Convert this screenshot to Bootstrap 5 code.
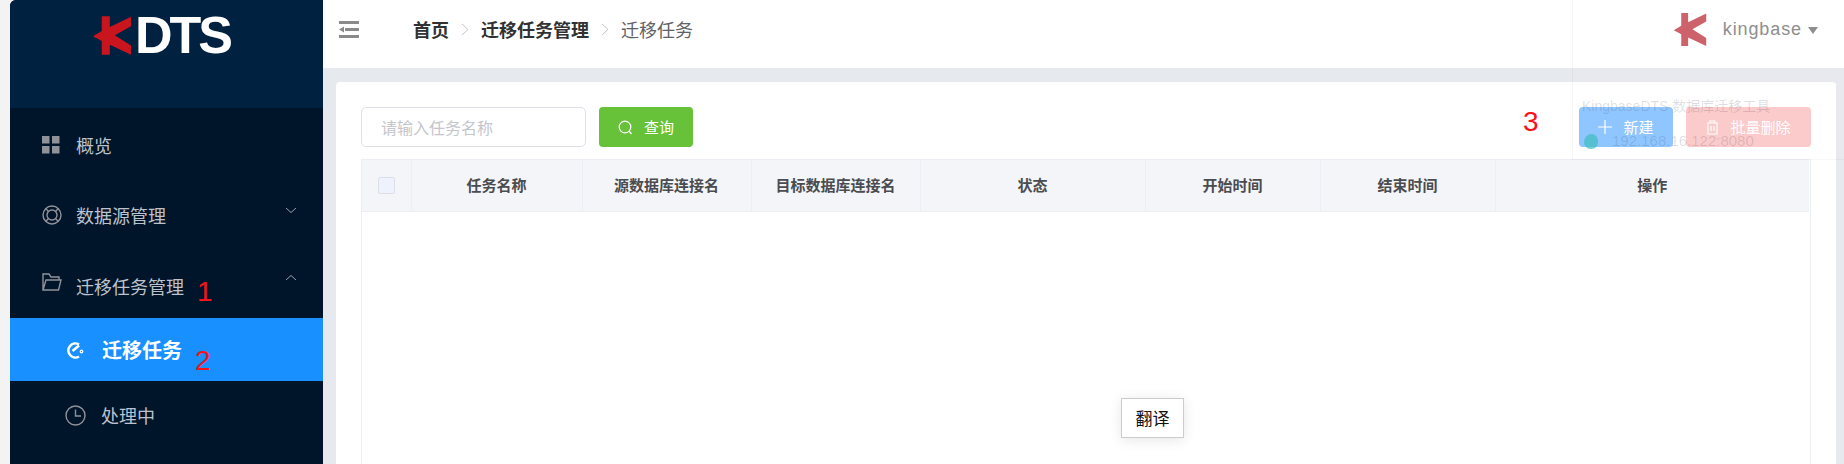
<!DOCTYPE html>
<html lang="zh-CN">

<head>
    <meta charset="utf-8" />
    <meta name="viewport" content="width=device-width, initial-scale=1" />
    <title>KingbaseDTS</title>

    <link rel="stylesheet" href="https://cdn.jsdelivr.net/npm/bootstrap@5.3.2/dist/css/bootstrap.min.css">
    <style>
        html, body {
            height: 464px;
            overflow: hidden;
        }

        body {
            position: relative;
            background-color: #f3f3f3;
            font-family: "Noto Sans CJK SC", "Liberation Sans", sans-serif;
        }

        .edge-strip {
            width: 10px;
            flex: none;
        }

        .side-nav {
            width: 313px;
            flex: none;
            background-color: #00142a;
            border-top-left-radius: 6px;
            overflow: hidden;
        }

        .logo-box {
            height: 108px;
            flex: none;
            background-color: #002140;
            padding: 16px 0 0 83px;
            gap: 4px;
        }

        .logo-word {
            font-family: "Liberation Sans", sans-serif;
            font-weight: 700;
            font-size: 52px;
            line-height: 39px;
            letter-spacing: -3px;
            color: #fff;
        }

        .menu-row {
            color: #bcc3cc;
            font-size: 18px;
            line-height: 24px;
            padding-left: 32px;
            padding-right: 26px;
        }

        .menu-row svg {
            flex: none;
        }

        .menu-label {
            margin-left: 14px;
        }

        .row-one { height: 71px; margin-top: 1px; }
        .row-one .menu-label { margin-left: 16px; }
        .row-two { height: 69px; }
        .row-three { height: 69px; padding-top: 4px; }

        .menu-active {
            height: 63px;
            flex: none;
            background-color: #1890ff;
            color: #fff;
            font-size: 20px;
            font-weight: 700;
            padding-left: 56px;
        }

        .menu-active .menu-label {
            margin-left: 18px;
        }

        .menu-sub {
            height: 68px;
            padding-left: 55px;
        }

        .menu-sub .menu-label {
            margin-left: 15px;
        }

        .top-bar {
            height: 68px;
            flex: none;
            background-color: #fff;
            padding: 0 0 10px 16px;
            gap: 54px;
        }

        .crumb-bold {
            font-size: 18px;
            font-weight: 700;
            color: #303133;
        }

        .crumb-last {
            font-size: 18px;
            color: #606266;
        }

        .crumb-line {
            gap: 12px;
        }

        .user-box {
            color: #8a8a8a;
            font-family: "Liberation Sans", sans-serif;
            font-size: 18px;
            letter-spacing: 0.9px;
            gap: 16px;
            padding-right: 26px;
        }

        .user-caret {
            width: 0;
            height: 0;
            border-left: 5.5px solid transparent;
            border-right: 5.5px solid transparent;
            border-top: 7px solid #8a8a8a;
            margin-left: -10px;
            margin-top: 3px;
        }

        .page-area {
            background-color: #e6e9ee;
            padding: 14px 8px 0 13px;
            min-height: 0;
        }

        .sheet {
            background-color: #fff;
            border-radius: 4px 4px 0 0;
            padding: 25px 25px 0 25px;
        }

        .tool-row {
            height: 52px;
            flex: none;
        }

        .task-input {
            width: 225px;
            height: 40px;
            border: 1px solid #dcdfe6;
            border-radius: 5px;
            padding: 0 19px;
            font-size: 16px;
            box-shadow: none;
        }

        .task-input::placeholder {
            color: #c4c6cc;
        }

        .act-btn {
            height: 40px;
            border: 0;
            border-radius: 4px;
            color: #fff;
            font-size: 15px;
            padding: 0;
            gap: 11px;
        }

        .btn-query { width: 94px; margin-left: 13px; background-color: #67c23a; }
        .btn-new { width: 94px; background-color: #8cc4ff; }
        .btn-drop { width: 125px; margin-left: 13px; background-color: #fbc8c8; }

        .grid-wrap {
            border-left: 1px solid #ebeef5;
            border-right: 1px solid #ebeef5;
        }

        .task-grid {
            table-layout: fixed;
            width: 1447px;
            margin: 0;
            border-collapse: collapse;
        }

        .task-grid th {
            height: 52px;
            padding: 0;
            background-color: #f4f5f9;
            border: 1px solid #ebeef5;
            border-left: 0;
            color: #4a4c50;
            font-size: 15px;
            font-weight: 700;
            text-align: center;
            vertical-align: middle;
        }

        .task-grid th:last-child {
            border-right: 0;
        }

        .fake-check {
            display: block;
            width: 17px;
            height: 17px;
            margin: 0 auto;
            background-color: #edf2fc;
            border: 1px solid #dcdfe6;
            border-radius: 2px;
        }

        .ghost-card {
            position: absolute;
            left: 1572px;
            top: 0;
            width: 272px;
            height: 160px;
            background-color: rgba(255, 255, 255, 0.04);
            border-left: 1px solid rgba(0, 0, 0, 0.03);
            border-bottom: 1px solid rgba(0, 0, 0, 0.03);
            color: rgba(40, 50, 70, 0.16);
            font-family: "Liberation Sans", "Noto Sans CJK SC", sans-serif;
            font-size: 14px;
        }

        .ghost-title {
            position: absolute;
            left: 9px;
            top: 96px;
            white-space: nowrap;
        }

        .ghost-addr {
            position: absolute;
            left: 11px;
            top: 130px;
            white-space: nowrap;
            font-size: 15px;
            display: flex;
            align-items: center;
            gap: 14px;
        }

        .ghost-dot {
            width: 14px;
            height: 15px;
            background-color: rgba(60, 190, 190, 0.7);
            border-radius: 60% 50% 50% 50%;
        }

        .mark-num {
            position: absolute;
            color: #f5141c;
            font-family: "Liberation Sans", sans-serif;
            font-size: 28px;
            line-height: 30px;
        }

        .translate-pop {
            position: absolute;
            left: 1121px;
            top: 398px;
            width: 63px;
            height: 40px;
            background-color: #fff;
            border: 1px solid #ccc;
            box-shadow: 0 2px 12px rgba(0, 0, 0, 0.1);
            color: #111;
            font-size: 17px;
        }
    </style>
</head>

<body class="d-flex">
    <div class="edge-strip"></div>

    <aside class="side-nav d-flex flex-column">
        <div class="logo-box d-flex align-items-start">
            <svg width="38" height="39" viewBox="280 48 113 115">
                <polygon fill="#c9151e" points="280,108 306,92 306,48 330,48 330,80 393,50 393,78 345,105 393,135 393,163 330,133 330,163 306,163 306,122" />
            </svg>
            <span class="logo-word">DTS</span>
        </div>

        <div class="menu-row row-one d-flex align-items-center">
            <svg width="18" height="18" viewBox="0 0 18 18" fill="#8f9298">
                <rect x="0" y="0" width="7.5" height="7.5" />
                <rect x="10" y="0" width="7.5" height="7.5" />
                <rect x="0" y="10" width="7.5" height="7.5" />
                <rect x="10" y="10" width="7.5" height="7.5" />
            </svg>
            <span class="menu-label">概览</span>
        </div>

        <div class="menu-row row-two d-flex align-items-center">
            <svg width="20" height="20" viewBox="0 0 20 20" fill="none" stroke="#8f9298" stroke-width="1.4">
                <circle cx="10" cy="10" r="9" />
                <circle cx="10" cy="10" r="5" />
                <path d="M3.6 3.6 6.5 6.5M16.4 3.6 13.5 6.5M3.6 16.4 6.5 13.5M16.4 16.4 13.5 13.5" />
            </svg>
            <span class="menu-label">数据源管理</span>
            <svg class="ms-auto mb-2" width="12" height="7" viewBox="0 0 12 7" fill="none" stroke="#9aa0a8">
                <path d="M1 1 6 5.5 11 1" />
            </svg>
        </div>

        <div class="menu-row row-three d-flex align-items-center">
            <svg class="mb-2" width="20" height="18" viewBox="0 0 20 18" fill="none" stroke="#8f9298" stroke-width="1.4">
                <path d="M1 17V1H7L9 4H17V7M1 17H16.5L19 7H4L1 17Z" />
            </svg>
            <span class="menu-label">迁移任务管理</span>
            <svg class="ms-auto mb-3" width="12" height="7" viewBox="0 0 12 7" fill="none" stroke="#9aa0a8">
                <path d="M1 6 6 1.5 11 6" />
            </svg>
        </div>

        <div class="menu-active d-flex align-items-center">
            <svg width="18" height="18" viewBox="0 0 18 18" fill="none" stroke="#fff" stroke-width="2.6">
                <path d="M13 15.5A7 7 0 1 1 13 3.5" />
                <path d="M6.5 10 13 4.5" />
                <circle cx="15.5" cy="10.5" r="0.6" />
            </svg>
            <span class="menu-label">迁移任务</span>
        </div>

        <div class="menu-row menu-sub d-flex align-items-center">
            <svg width="21" height="21" viewBox="0 0 21 21" fill="none" stroke="#8f9298" stroke-width="1.4">
                <circle cx="10.5" cy="10.5" r="9.5" />
                <path d="M10.5 4.5V11H16" />
            </svg>
            <span class="menu-label">处理中</span>
        </div>
    </aside>

    <main class="flex-grow-1 d-flex flex-column">
        <header class="top-bar d-flex align-items-center">
            <svg width="20" height="17" viewBox="0 0 20 17" fill="#8a8a8a">
                <rect x="0" y="0" width="20" height="3" />
                <rect x="6" y="7" width="14" height="3" />
                <rect x="0" y="14" width="20" height="3" />
                <polygon points="0,8.5 5,5.5 5,11.5" />
            </svg>
            <div class="crumb-line d-flex align-items-center">
                <span class="crumb-bold">首页</span>
                <svg width="8" height="13" viewBox="0 0 8 13" fill="none" stroke="#c0c4cc"><path d="M1 1 7 6.5 1 12" /></svg>
                <span class="crumb-bold">迁移任务管理</span>
                <svg width="8" height="13" viewBox="0 0 8 13" fill="none" stroke="#c0c4cc"><path d="M1 1 7 6.5 1 12" /></svg>
                <span class="crumb-last">迁移任务</span>
            </div>
            <div class="user-box ms-auto d-flex align-items-center">
                <svg width="34" height="33" viewBox="280 48 113 115">
                    <polygon fill="#cd5c65" points="280,108 306,92 306,48 330,48 330,80 393,50 393,78 345,105 393,135 393,163 330,133 330,163 306,163 306,122" />
                </svg>
                <span>kingbase</span>
                <span class="user-caret"></span>
            </div>
        </header>

        <div class="page-area flex-grow-1 d-flex flex-column">
            <section class="sheet flex-grow-1 d-flex flex-column">
                <div class="tool-row d-flex align-items-start">
                    <input class="form-control task-input" type="text" placeholder="请输入任务名称">
                    <button class="btn act-btn btn-query d-flex align-items-center justify-content-center">
                        <svg width="15" height="15" viewBox="0 0 15 15" fill="none" stroke="#fff" stroke-width="1.2">
                            <circle cx="7" cy="7" r="5.8" />
                            <path d="M11 11 13.5 14" />
                        </svg>
                        <span>查询</span>
                    </button>
                    <button class="btn act-btn btn-new ms-auto d-flex align-items-center justify-content-center">
                        <svg width="14" height="14" viewBox="0 0 14 14" stroke="#fff" stroke-width="1.2">
                            <path d="M7 0V14M0 7H14" />
                        </svg>
                        <span>新建</span>
                    </button>
                    <button class="btn act-btn btn-drop d-flex align-items-center justify-content-center">
                        <svg width="13" height="15" viewBox="0 0 13 15" fill="none" stroke="#fff" stroke-width="1.1">
                            <path d="M1 3H12M4 3V1H9V3M2 3V14H11V3M5 6V11M8 6V11" />
                        </svg>
                        <span>批量删除</span>
                    </button>
                </div>

                <div class="grid-wrap flex-grow-1">
                    <table class="task-grid">
                        <colgroup id="gridCols"></colgroup>
                        <thead>
                            <tr>
                                <th><span class="fake-check"></span></th>
                                <th>任务名称</th>
                                <th>源数据库连接名</th>
                                <th>目标数据库连接名</th>
                                <th>状态</th>
                                <th>开始时间</th>
                                <th>结束时间</th>
                                <th>操作</th>
                            </tr>
                        </thead>
                    </table>
                </div>
            </section>
        </div>
    </main>

    <div class="ghost-card">
        <div class="ghost-title">KingbaseDTS 数据库迁移工具</div>
        <div class="ghost-addr"><span class="ghost-dot"></span>192.168.16.122:8080</div>
    </div>

    <span class="mark-num" style="left: 197px; top: 277px;">1</span>
    <span class="mark-num" style="left: 195px; top: 346px;">2</span>
    <span class="mark-num" style="left: 1523px; top: 107px;">3</span>

    <div class="translate-pop d-flex align-items-center justify-content-center">翻译</div>

    <script src="https://cdn.jsdelivr.net/npm/bootstrap@5.3.2/dist/js/bootstrap.bundle.min.js"></script>
    <script>
        const colWidths = [49, 171, 169, 169, 225, 175, 175, 314];
        const gridCols = document.getElementById("gridCols");
        colWidths.forEach(w => {
            const col = document.createElement("col");
            col.style.width = `${w}px`;
            gridCols.appendChild(col);
        });
    </script>
</body>

</html>
